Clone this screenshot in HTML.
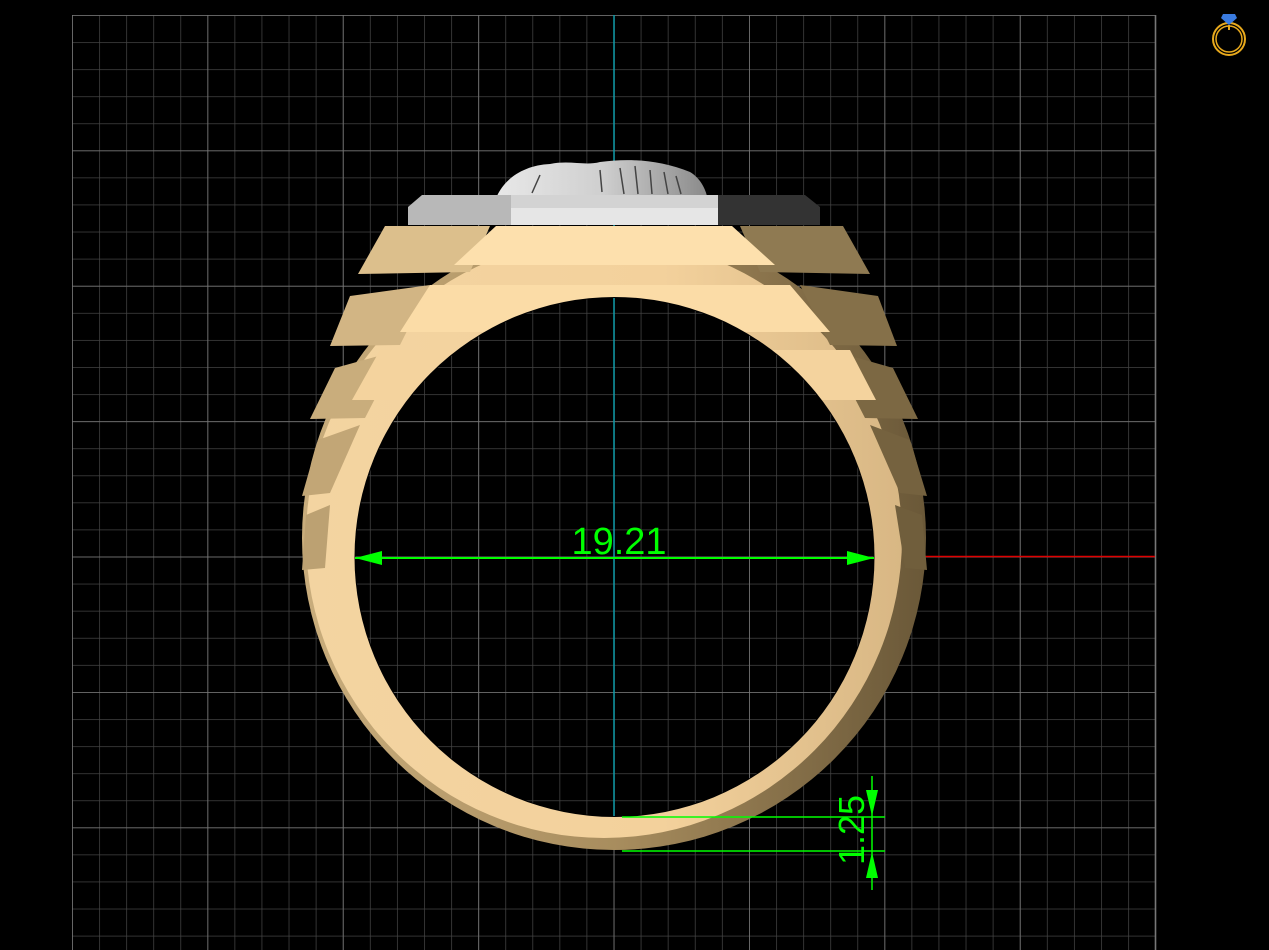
<!DOCTYPE html>
<html><head><meta charset="utf-8"><style>
html,body{margin:0;padding:0;background:#000;width:1269px;height:950px;overflow:hidden}
svg{display:block}
</style></head><body>
<svg width="1269" height="950" viewBox="0 0 1269 950" xmlns="http://www.w3.org/2000/svg">
<defs>
<pattern id="minor" x="72" y="15" width="27.08" height="27.08" patternUnits="userSpaceOnUse">
<path d="M0 0H27.08M0 0V27.08" stroke="#444" stroke-width="1.5" fill="none"/>
</pattern>
<pattern id="major" x="72" y="15" width="135.4" height="135.4" patternUnits="userSpaceOnUse">
<path d="M0 0H135.4M0 0V135.4" stroke="#777" stroke-width="1.6" fill="none"/>
</pattern>
<linearGradient id="band" x1="0" x2="1" y1="0" y2="0">
<stop offset="0" stop-color="#c9ad7c"/><stop offset="0.5" stop-color="#a88d5e"/><stop offset="1" stop-color="#6a5838"/>
</linearGradient>
<linearGradient id="face" x1="0" x2="1" y1="0" y2="0">
<stop offset="0" stop-color="#f3d4a1"/><stop offset="0.6" stop-color="#f3d19c"/><stop offset="1" stop-color="#d8b784"/>
</linearGradient>
<linearGradient id="lion" x1="0" x2="1"><stop offset="0" stop-color="#e8e8e8"/><stop offset="0.5" stop-color="#cfcfcf"/><stop offset="1" stop-color="#8a8a8a"/></linearGradient>
</defs>
<rect x="72" y="15" width="1084" height="935" fill="url(#minor)"/>
<rect x="72" y="15" width="1084" height="935" fill="url(#major)"/>
<line x1="1155.5" y1="15" x2="1155.5" y2="950" stroke="#777" stroke-width="1.6"/>
<line x1="614" y1="15" x2="614" y2="830" stroke="#0e9aa8" stroke-width="1.5"/>
<line x1="875" y1="556.5" x2="1155" y2="556.5" stroke="#e00000" stroke-width="1.5"/>

<!-- lion head -->
<path d="M497 196 C505 178 525 165 550 164 C570 160 585 166 600 162 C630 158 660 160 690 172 C700 178 705 188 707 196 Z" fill="url(#lion)"/>
<path d="M620 168 l4 26 M635 166 l3 28 M650 170 l2 24 M664 172 l4 22 M676 176 l5 18 M600 170 l2 22 M540 175 l-8 18" stroke="#444" stroke-width="1.5"/>
<!-- plates -->
<polygon points="408,207 422,195 512,195 512,225 408,225" fill="#b8b8b8"/>
<polygon points="511,207 517,195 712,195 718,207 718,225 511,225" fill="#e6e6e6"/>
<polygon points="511,195 718,195 718,208 511,208" fill="#d3d3d3"/>
<polygon points="718,207 718,195 805,195 820,207 820,225 718,225" fill="#333"/>

<!-- outer band -->
<circle cx="614" cy="538" r="312" fill="url(#band)"/>
<path d="M305 560 A306 306 0 0 0 900 660 L900 300 L330 300 Z" fill="url(#face)" opacity="0"/>
<ellipse cx="604" cy="538" rx="298" ry="300" fill="url(#face)"/>
<!-- left teeth -->
<polygon points="385,226 490,226 470,272 358,274" fill="#dcbf8c"/>
<polygon points="350,296 430,285 400,345 330,346" fill="#d2b584"/>
<polygon points="335,368 400,350 365,418 310,419" fill="#c9ad7c"/>
<polygon points="318,440 360,425 330,493 302,496" fill="#c2a676"/>
<polygon points="306,515 330,505 325,568 302,570" fill="#bca172"/>
<!-- right teeth -->
<polygon points="843,226 740,226 760,272 870,274" fill="#8f7a52"/>
<polygon points="878,296 800,285 830,345 897,346" fill="#857049"/>
<polygon points="893,368 830,350 865,418 918,419" fill="#7c6843"/>
<polygon points="910,440 870,425 900,493 927,496" fill="#75623f"/>
<polygon points="922,515 895,505 905,568 927,570" fill="#705e3c"/>
<!-- central face tiers -->
<polygon points="496,226 732,226 775,265 454,265" fill="#fde0ad"/>
<polygon points="430,285 790,285 830,332 400,332" fill="#fbdca7"/>
<polygon points="380,350 850,350 876,400 352,400" fill="#f4d39e"/>
<!-- inner hole -->
<circle cx="614.5" cy="557" r="260" fill="#000"/>
<defs><clipPath id="hole"><circle cx="614.5" cy="557" r="259"/></clipPath></defs>
<g clip-path="url(#hole)">
<rect x="72" y="15" width="1084" height="935" fill="url(#minor)"/>
<rect x="72" y="15" width="1084" height="935" fill="url(#major)"/>
<line x1="614" y1="15" x2="614" y2="830" stroke="#0e9aa8" stroke-width="1.5"/>
</g>

<!-- dimension 19.21 -->
<line x1="355" y1="558" x2="874" y2="558" stroke="#00ff00" stroke-width="2"/>
<polygon points="355,558 382,551 382,565" fill="#00ff00"/>
<polygon points="874,558 847,551 847,565" fill="#00ff00"/>
<text x="619" y="554" font-family="Liberation Sans, sans-serif" font-size="38" fill="#00ff00" text-anchor="middle">19.21</text>
<!-- dimension 1.25 -->
<line x1="622" y1="817" x2="885" y2="817" stroke="#00ff00" stroke-width="1.5"/>
<line x1="622" y1="851" x2="885" y2="851" stroke="#00ff00" stroke-width="1.5"/>
<line x1="872" y1="776" x2="872" y2="890" stroke="#00ff00" stroke-width="1.5"/>
<polygon points="872,816 866,790 878,790" fill="#00ff00"/>
<polygon points="872,852 866,878 878,878" fill="#00ff00"/>
<text transform="translate(864,830) rotate(-90)" font-family="Liberation Sans, sans-serif" font-size="36" fill="#00ff00" text-anchor="middle">1.25</text>

<!-- icon -->
<circle cx="1229" cy="39" r="16" fill="none" stroke="#e8a91c" stroke-width="2"/>
<circle cx="1229" cy="39" r="13" fill="none" stroke="#e8a91c" stroke-width="1.5"/>
<polygon points="1223,14 1235,14 1237,18 1229,25 1221,18" fill="#3a7be0"/>
<line x1="1229" y1="25" x2="1229" y2="30" stroke="#e8a91c" stroke-width="2"/>
</svg>
</body></html>
